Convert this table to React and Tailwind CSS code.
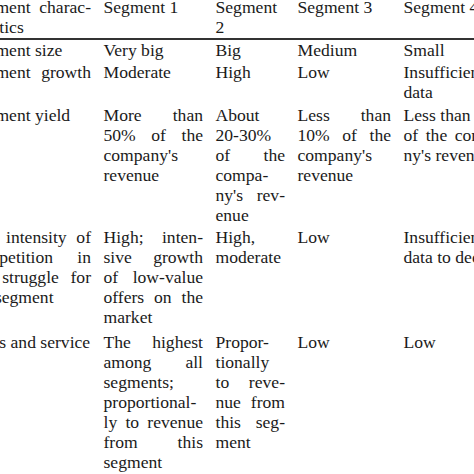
import React from 'react';

// each cell is a list of typeset lines; every line but the last is justified
const header = [
  ['Segment charac-', 'teristics'],
  ['Segment 1'],
  ['Segment', '2'],
  ['Segment 3'],
  ['Segment 4'],
];

const rows = [
  { pad: 'pb-[2.7px]', cells: [['Segment size'], ['Very big'], ['Big'], ['Medium'], ['Small']] },
  {
    pad: 'pb-[2.7px]',
    cells: [['Segment growth', 'rate'], ['Moderate'], ['High'], ['Low'], ['Insufficient', 'data']],
  },
  {
    pad: 'pb-[2.4px]',
    cells: [
      ['Segment yield'],
      ['More than', '50% of the', "company's", 'revenue'],
      ['About', '20-30%', 'of the', 'compa-', "ny's rev-", 'enue'],
      ['Less than', '10% of the', "company's", 'revenue'],
      ['Less than 10%', 'of the compa-', "ny's revenue"],
    ],
  },
  {
    pad: 'pb-[5px]',
    cells: [
      ['The intensity of', 'competition in', 'the struggle for', 'the segment'],
      ['High; inten-', 'sive growth', 'of low-value', 'offers on the', 'market'],
      ['High,', 'moderate'],
      ['Low'],
      ['Insufficient', 'data to decide'],
    ],
  },
  {
    pad: 'pb-[2.7px]',
    cells: [
      ['Sales and service'],
      ['The highest', 'among all', 'segments;', 'proportional-', 'ly to revenue', 'from this', 'segment'],
      ['Propor-', 'tionally', 'to reve-', 'nue from', 'this seg-', 'ment'],
      ['Low'],
      ['Low'],
    ],
  },
];

function Cell({ lines, pad }) {
  return (
    <div className={pad}>
      {lines.map((line, i) => (
        <div
          key={i}
          className={i < lines.length - 1 ? 'text-justify [text-align-last:justify]' : ''}
        >
          {line}
        </div>
      ))}
    </div>
  );
}

export default function App() {
  return (
    <div className="w-[474px] h-[474px] overflow-hidden bg-white">
      <div className="-ml-[31px] -mt-[3px] w-[540px] grid grid-cols-[122px_99.5px_69.5px_93.5px_104px] gap-x-[12.5px] font-['Liberation_Serif',serif] text-[17.6px] leading-[20px] text-[#1a1a1a]">
        {header.map((c, i) => (
          <Cell key={i} lines={c} pad="pb-[1px]" />
        ))}
        <div className="col-span-5 h-[1.5px] bg-[#333]" />
        {rows.map((row, r) =>
          row.cells.map((c, i) => <Cell key={r + '-' + i} lines={c} pad={row.pad} />)
        )}
      </div>
    </div>
  );
}
